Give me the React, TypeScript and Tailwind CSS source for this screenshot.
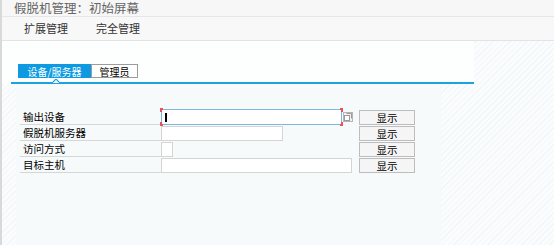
const rows = [
  { label: "输出设备", kind: "focus" },
  { label: "假脱机服务器", kind: "mid" },
  { label: "访问方式", kind: "box" },
  { label: "目标主机", kind: "wide" },
];

function Field({ kind }: { kind: string }) {
  if (kind === "focus") {
    return (
      <div className="flex items-center">
        <div className="relative h-[16px] w-[181px] border border-[#7fb6dd] bg-white">
          <span className="absolute left-[3px] top-[3px] h-[9px] w-[2px] bg-black" />
          <span className="absolute -left-[2px] -top-[2px] h-[4px] w-[3px] border-l-2 border-t-2 border-[#e8535a]" />
          <span className="absolute -left-[2px] -bottom-[2px] h-[4px] w-[3px] border-l-2 border-b-2 border-[#e8535a]" />
          <span className="absolute -right-[2px] -top-[2px] h-[4px] w-[3px] border-r-2 border-t-2 border-[#e8535a]" />
          <span className="absolute -right-[2px] -bottom-[2px] h-[4px] w-[3px] border-r-2 border-b-2 border-[#e8535a]" />
        </div>
        <svg width="10" height="10" viewBox="0 0 10 10" className="ml-[1px]">
          <rect x="0.5" y="0.5" width="9" height="9" fill="#f4f4f4" stroke="#b5b5b5" />
          <rect x="1.5" y="3.5" width="5" height="5" fill="#fff" stroke="#9a9a9a" />
          <path d="M3.5 1.5h5v5" fill="none" stroke="#9a9a9a" />
        </svg>
      </div>
    );
  }
  if (kind === "mid") return <div className="h-[15px] w-[122px] border border-[#d4d4d4] bg-white" />;
  if (kind === "box") return <div className="h-[15px] w-[12px] border border-[#d4d4d4] bg-white" />;
  return <div className="h-[15px] w-[191px] border border-[#d4d4d4] bg-white" />;
}

export default function App() {
  return (
    <div
      className="flex h-[245px] w-[554px] flex-col overflow-hidden border-l-2 border-[#d9d9d9] bg-[repeating-linear-gradient(135deg,#f1f6f8_0px,#f1f6f8_1px,#fafcfd_1px,#fafcfd_4px)] text-[#333]"
      style={{ fontFamily: '"Noto Sans CJK SC", "Noto Sans", sans-serif' }}
    >
      <div className="flex h-[17px] shrink-0 items-start border-b border-[#e6e6e6] bg-[#f7f7f7] pl-[12px] pt-[1px]">
        <span className="text-[12.5px] leading-[14px] text-[#666]">假脱机管理：初始屏幕</span>
      </div>
      <div className="flex h-[24px] shrink-0 items-center gap-[28px] border-b border-[#e3e3e3] bg-[#f8f8f8] pl-[22px] text-[11px]">
        <span>扩展管理</span>
        <span>完全管理</span>
      </div>
      <div className="flex flex-1 flex-col">
        <div className="w-[472px] bg-[#fdfefe] pl-[9px] pt-[23px]">
          <div className="flex pl-[7px]">
            <div className="flex h-[14px] w-[73px] items-center justify-center bg-[#0d9ae0] text-[10px] text-white">设备/服务器</div>
            <div className="flex h-[14px] w-[47px] items-center justify-center border border-[#9c9c9c] bg-white text-[10px] text-black">管理员</div>
          </div>
          <div className="relative mt-[4px] h-[2px] w-[463px] bg-[#1aa3df]">
            <svg width="8" height="4" viewBox="0 0 8 4" className="absolute left-[41px] -top-[3px]">
              <path d="M0 4L4 0L8 4" fill="#fff" stroke="#1aa3df" strokeWidth="1.2" />
            </svg>
          </div>
        </div>
        <div className="flex flex-1 flex-col">
          <div className="ml-[14px] flex w-[425px] flex-1 flex-col bg-[#f7fafb] pl-[4px] pt-[25px]">
            {rows.map((r) => (
              <div key={r.label} className="flex h-[16px] items-center">
                <div className="flex h-[16px] w-[141px] items-center border-b border-[#d6d6d6] pl-[3px] text-[10.5px] text-black">
                  {r.label}
                </div>
                <div className="w-[198px]">
                  <Field kind={r.kind} />
                </div>
                <button className="h-[15px] w-[56px] border border-[#bdbdbd] bg-[#f5f5f5] text-[10.5px] leading-[13px] text-black">
                  显示
                </button>
              </div>
            ))}
          </div>
        </div>
      </div>
    </div>
  );
}
